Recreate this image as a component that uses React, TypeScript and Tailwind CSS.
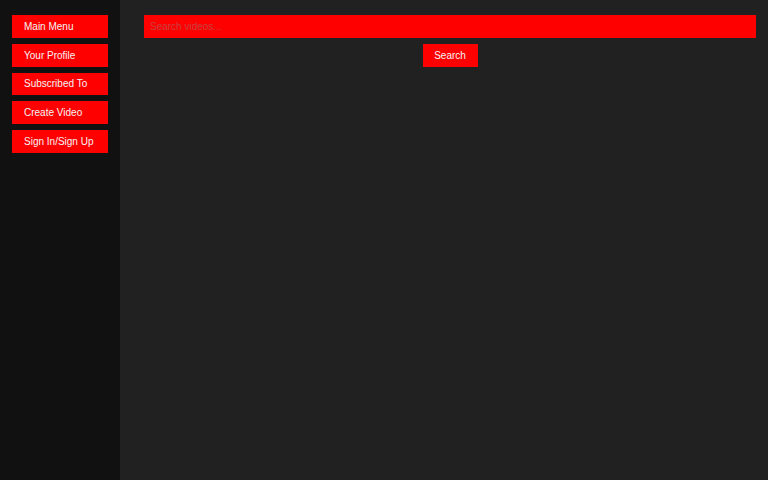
import React from "react";

export default function App() {
  const items = ["Main Menu", "Your Profile", "Subscribed To", "Create Video", "Sign In/Sign Up"];
  return (
    <div className="flex h-[480px] w-[768px] overflow-hidden" style={{ fontFamily: '"Liberation Sans", Arial, sans-serif' }}>
      <div className="flex w-[120px] flex-col gap-[6px] bg-[#111111] px-3 pt-[15px]">
        {items.map((t) => (
          <button key={t} className="flex h-[22.75px] w-[96px] items-center bg-[#ff0000] pl-3 text-left text-[10px] text-[#f4f4f4]">
            {t}
          </button>
        ))}
      </div>
      <div className="flex flex-1 flex-col items-center bg-[#212121] pl-6 pr-3 pt-[15px]">
        <input
          className="h-[23px] w-full bg-[#ff0000] px-[6px] text-[10px] text-white outline-none placeholder:text-[#c84040]"
          placeholder="Search videos..."
        />
        <button className="mt-[6px] h-[23px] w-[55px] bg-[#ff0000] text-[10px] text-[#f4f4f4]">Search</button>
      </div>
    </div>
  );
}
